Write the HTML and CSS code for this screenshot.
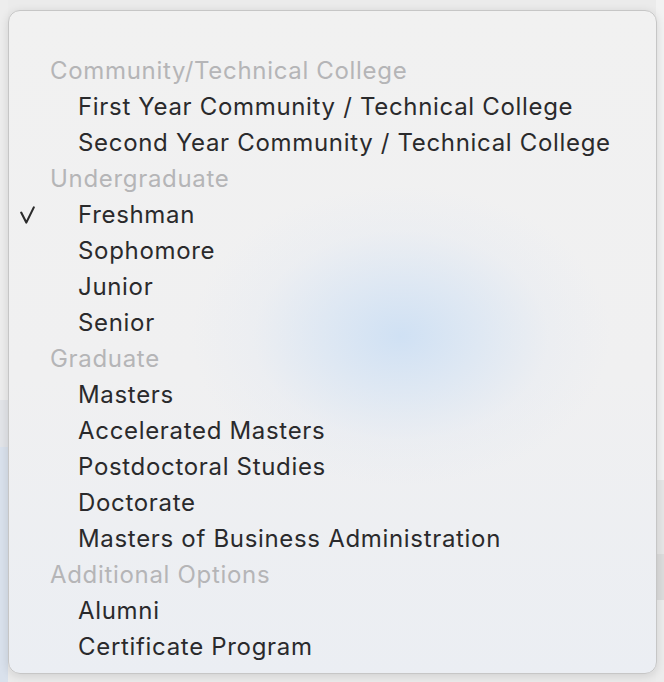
FILE: index.html
```html
<!DOCTYPE html>
<html lang="en">
<head>
<meta charset="UTF-8" />
<meta name="viewport" content="width=device-width, initial-scale=1" />
<title>Year in school</title>
<link rel="stylesheet" href="styles.css">
</head>
<body>

<div class="menu" role="listbox">
  <div class="group">Community/Technical College</div>
  <div class="option">First Year Community / Technical College</div>
  <div class="option">Second Year Community / Technical College</div>

  <div class="group">Undergraduate</div>
  <div class="option selected">
    <svg class="check" width="15" height="18" viewBox="0 0 15 18">
      <path d="M1.2 6.6 L6.3 16.6 L13.8 1.4" fill="none" stroke="#2b2b2b" stroke-width="2.1" stroke-linecap="round" stroke-linejoin="round"/>
    </svg>
    Freshman
  </div>
  <div class="option">Sophomore</div>
  <div class="option">Junior</div>
  <div class="option">Senior</div>

  <div class="group">Graduate</div>
  <div class="option">Masters</div>
  <div class="option">Accelerated Masters</div>
  <div class="option">Postdoctoral Studies</div>
  <div class="option">Doctorate</div>
  <div class="option">Masters of Business Administration</div>

  <div class="group">Additional Options</div>
  <div class="option">Alumni</div>
  <div class="option">Certificate Program</div>
</div>

</body>
</html>
```

FILE: styles.css
```css
* {
  box-sizing: border-box;
}
html, body {
  margin: 0;
  padding: 0;
  height: 100%;
}
body {
  background:
    linear-gradient(to bottom, #ededed 0, #ededed 400px, #e2e4e8 400px, #e2e4e8 447px, #d9e1ec 447px) 0 0 / 8px 100% no-repeat,
    linear-gradient(to bottom, #f2f2f2 0, #f2f2f2 480px, #e6e6e6 480px, #e6e6e6 554px, #dcdcdc 554px, #dcdcdc 600px, #ececec 600px) 100% 0 / 8px 100% no-repeat,
    #ebebeb;
  font-family: Inter, 'Noto Sans', sans-serif;
  overflow: hidden;
}
.menu {
  position: relative;
  margin: 10px 0 0 8px;
  width: 649px;
  height: 664px;
  padding: 42px 0 8px;
  border: 1px solid #c6c6c6;
  border-radius: 12px;
  background:
    radial-gradient(ellipse 210px 150px at 392px 325px, rgba(206, 224, 244, 0.95) 0, rgba(214, 228, 244, 0.7) 35%, rgba(226, 233, 243, 0.3) 70%, rgba(232, 236, 242, 0) 100%),
    linear-gradient(to bottom, #f1f1f1 0, #f0f0f1 55%, #ebeef3 100%);
  box-shadow: 0 2px 10px rgba(0, 0, 0, 0.12);
}
.group, .option {
  height: 36px;
  line-height: 36px;
  font-size: 24px;
  letter-spacing: 0.68px;
  white-space: nowrap;
}
.group {
  padding-left: 41px;
  color: #b5b5b7;
}
.option {
  position: relative;
  padding-left: 69px;
  color: #2a2a2c;
}
.check {
  position: absolute;
  left: 11px;
  top: 9px;
}
```
